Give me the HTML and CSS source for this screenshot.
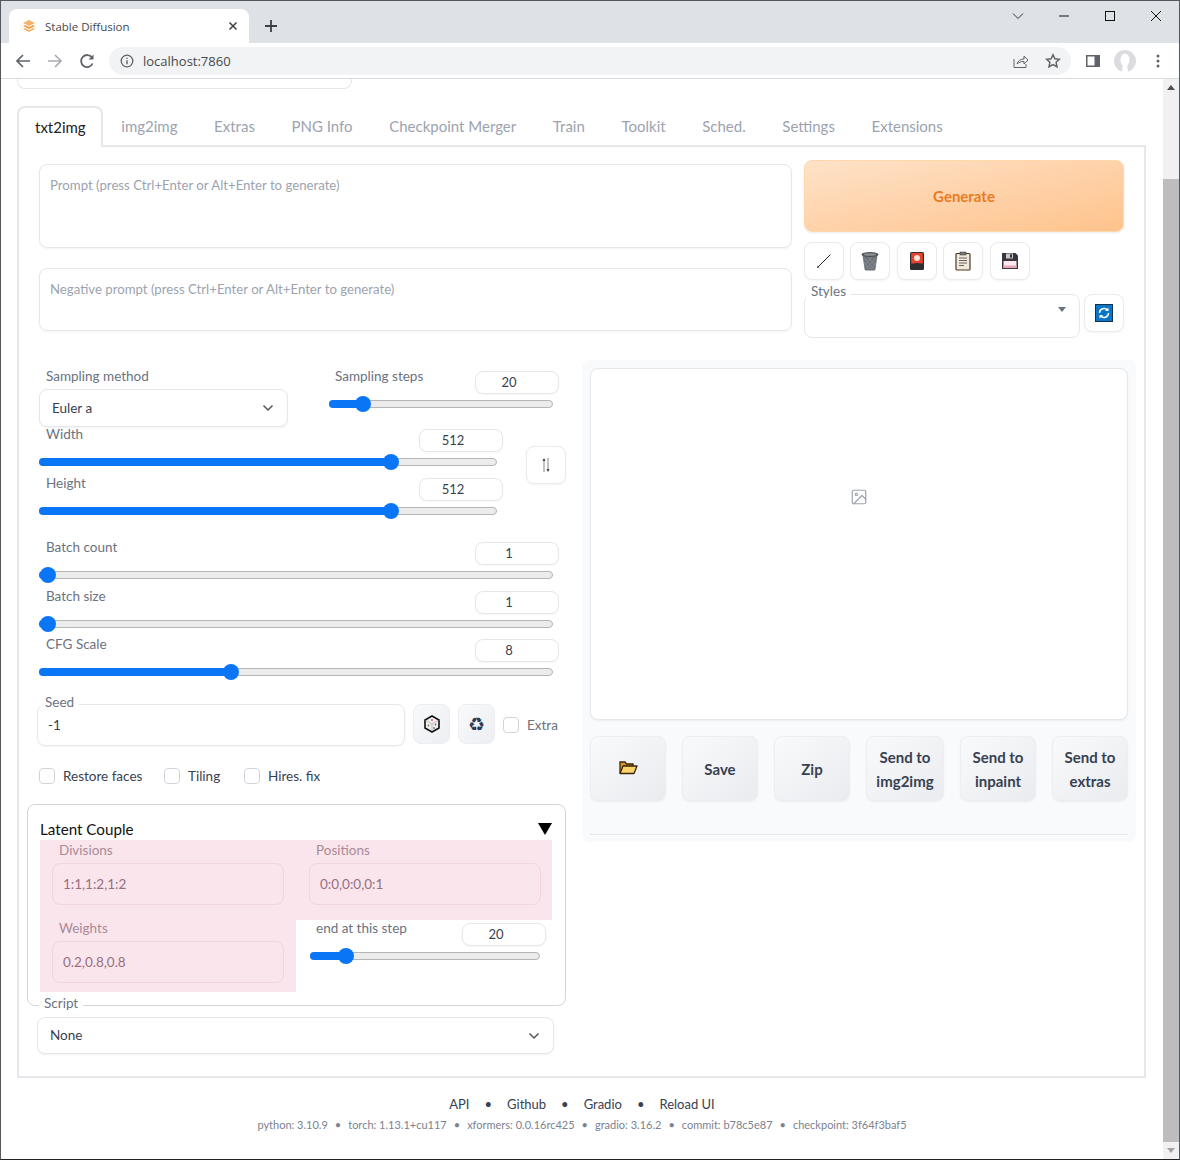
FILE: index.html
```html
<!DOCTYPE html>
<html lang="en">
<head>
  <meta charset="UTF-8">
  <title>Stable Diffusion</title>
  <link rel="stylesheet" href="styles.css">
</head>
<body>
<div class="window">

  <!-- browser chrome -->
  <div class="tabstrip">
    <div class="browser-tab">
      <svg class="favicon" width="14" height="14" viewBox="0 0 14 14"><path d="M7 1l6 3-6 3-6-3z" fill="#f6b26b"/><path d="M1 7l2-1 4 2 4-2 2 1-6 3z" fill="#f19a3e"/><path d="M1 10l2-1 4 2 4-2 2 1-6 3z" fill="#f6b26b"/></svg>
      <span class="browser-tab-title">Stable Diffusion</span>
      <svg class="tab-close" width="10" height="10" viewBox="0 0 10 10"><path d="M1.5 1.5l7 7M8.5 1.5l-7 7" stroke="#3c4043" stroke-width="1.5"/></svg>
    </div>
    <svg class="new-tab" width="14" height="14" viewBox="0 0 14 14"><path d="M7 1v12M1 7h12" stroke="#3c4043" stroke-width="1.8"/></svg>
    <div class="win-controls">
      <svg width="12" height="12" viewBox="0 0 12 12"><path d="M1 3.5l5 5 5-5" fill="none" stroke="#333" stroke-width="1"/></svg>
      <svg width="12" height="12" viewBox="0 0 12 12"><path d="M1 6h10" stroke="#111" stroke-width="1"/></svg>
      <svg width="12" height="12" viewBox="0 0 12 12"><rect x="1.5" y="1.5" width="9" height="9" fill="none" stroke="#111" stroke-width="1"/></svg>
      <svg width="12" height="12" viewBox="0 0 12 12"><path d="M1 1l10 10M11 1L1 11" stroke="#111" stroke-width="1"/></svg>
    </div>
  </div>
  <div class="toolbar">
    <svg class="nav-icon" width="16" height="16" viewBox="0 0 16 16"><path d="M15 8H2M8 2L2 8l6 6" fill="none" stroke="#5f6368" stroke-width="1.7"/></svg>
    <svg class="nav-icon" width="16" height="16" viewBox="0 0 16 16"><path d="M1 8h13M8 2l6 6-6 6" fill="none" stroke="#a9acb0" stroke-width="1.7"/></svg>
    <svg class="nav-icon" width="16" height="16" viewBox="0 0 16 16"><path d="M13.6 10.5A6 6 0 1 1 13 4.5" fill="none" stroke="#5f6368" stroke-width="1.8"/><path d="M14.5 1.5v5h-5z" fill="#5f6368"/></svg>
    <div class="omnibox">
      <svg width="14" height="14" viewBox="0 0 14 14"><circle cx="7" cy="7" r="5.8" fill="none" stroke="#5f6368" stroke-width="1.3"/><path d="M7 6.2v4M7 3.8v1.3" stroke="#5f6368" stroke-width="1.4"/></svg>
      <span class="url">localhost:7860</span>
      <svg class="omni-share" width="16" height="16" viewBox="0 0 16 16"><path d="M1 6v8.500h12V11" fill="none" stroke="#5f6368" stroke-width="1"/><path d="M4 11c1-3.500 4-5 7-5V3l4 4-4 4V8.500c-3 0-5 .7-7 2.500z" fill="none" stroke="#5f6368" stroke-width="1"/></svg>
      <svg class="omni-star" width="16" height="16" viewBox="0 0 16 16"><path d="M8 1.800l1.900 4 4.400.5-3.200 3 .9 4.400L8 11.500l-4 2.200.9-4.400-3.200-3 4.400-.5z" fill="none" stroke="#5f6368" stroke-width="1.500"/></svg>
    </div>
    <svg class="side-panel" width="14" height="12" viewBox="0 0 14 12"><rect width="14" height="12" fill="#5f6368"/><rect x="1.500" y="1.500" width="7" height="9" fill="#fff"/></svg>
    <svg class="avatar" width="22" height="22" viewBox="0 0 22 22"><circle cx="11" cy="11" r="11" fill="#dadce0"/><ellipse cx="11" cy="10" rx="4.500" ry="6.500" fill="#fff"/><path d="M9 14h4l1 8H8z" fill="#fff"/></svg>
    <svg class="dots" width="4" height="14" viewBox="0 0 4 14"><circle cx="2" cy="2" r="1.500" fill="#5f6368"/><circle cx="2" cy="7" r="1.500" fill="#5f6368"/><circle cx="2" cy="12" r="1.500" fill="#5f6368"/></svg>
  </div>

  <div class="viewport">
    <main class="page">
      <div class="checkpoint-stub"></div>

      <nav class="tabs">
        <span class="tab selected">txt2img</span>
        <span class="tab">img2img</span>
        <span class="tab">Extras</span>
        <span class="tab">PNG Info</span>
        <span class="tab">Checkpoint Merger</span>
        <span class="tab">Train</span>
        <span class="tab">Toolkit</span>
        <span class="tab">Sched.</span>
        <span class="tab">Settings</span>
        <span class="tab">Extensions</span>
      </nav>

      <section class="panel">
        <div class="top-row">
          <div class="prompts">
            <div class="prompt prompt-pos">Prompt (press Ctrl+Enter or Alt+Enter to generate)</div>
            <div class="prompt prompt-neg">Negative prompt (press Ctrl+Enter or Alt+Enter to generate)</div>
          </div>
          <div class="actions">
            <button class="generate">Generate</button>
            <div class="tool-row">
              <button class="tool"><svg width="20" height="20" viewBox="0 0 20 20"><path d="M16.500 3.500L4.500 15.500" stroke="#222" stroke-width="1"/><path d="M3 17l.8-2.500 1.700 1.700z" fill="#222"/></svg></button>
              <button class="tool"><svg width="20" height="20" viewBox="0 0 20 20"><path d="M2.500 4l2 14q.2 1.500 1.500 1.500h8q1.300 0 1.500-1.500l2-14z" fill="#6d7378"/><path d="M4 7l10 11M16 7L6 18M3.500 11l6 7M16.500 11l-6 7M8 6l8 9M12 6L4 15" stroke="#8f9498" stroke-width=".7"/><ellipse cx="10" cy="3.500" rx="8.500" ry="2.500" fill="#4b5054"/><ellipse cx="10" cy="3.500" rx="6.500" ry="1.300" fill="#8b9094"/></svg></button>
              <button class="tool"><svg width="20" height="20" viewBox="0 0 20 20"><rect x="3" y="1" width="14" height="18" rx="1.500" fill="#2f2f33"/><rect x="4.200" y="2" width="11.600" height="10.500" fill="#e8412f"/><path d="M4.200 14l5-2 6.600 1v5H4.200z" fill="#2f2f33"/><circle cx="10" cy="7" r="3" fill="#fde3d2"/></svg></button>
              <button class="tool"><svg width="20" height="20" viewBox="0 0 20 20"><rect x="3" y="2.500" width="14" height="16.500" rx="1" fill="#f0e9da" stroke="#4a3a28" stroke-width="1.200"/><rect x="7" y="1" width="6" height="3" fill="#777" stroke="#333" stroke-width=".5"/><path d="M6 7h8M6 9.500h8M6 12h8M6 14.500h5" stroke="#666" stroke-width="1.100"/></svg></button>
              <button class="tool"><svg width="20" height="20" viewBox="0 0 20 20"><path d="M2 2h13.500L18 4.500V18H2z" fill="#3a3340"/><rect x="6" y="2.500" width="7" height="5" fill="#c9c9cc"/><rect x="10" y="3.300" width="2" height="3.300" fill="#3a3340"/><rect x="3.500" y="10" width="13" height="7" fill="#fbe9ee"/><rect x="3.500" y="14.500" width="13" height="2.500" fill="#e3a8b8"/></svg></button>
            </div>
            <div class="styles-row">
              <div class="styles-box">
                <span class="legend styles-legend">Styles</span>
                <span class="caret"></span>
              </div>
              <button class="tool refresh"><svg width="18" height="18" viewBox="0 0 18 18"><rect x=".5" y=".5" width="17" height="17" fill="#0a76c9" stroke="#14304a"/><path d="M4.500 9a4.500 4.500 0 0 1 8-2.800M13.500 9a4.500 4.500 0 0 1-8 2.800" fill="none" stroke="#fff" stroke-width="1.500"/><path d="M13.500 3.500v3.500H10zM4.500 14.500V11H8z" fill="#fff"/></svg></button>
            </div>
          </div>
        </div>

        <div class="main-row">
          <div class="settings">
            <div class="sampler-row">
              <div class="sampler">
                <div class="field-label">Sampling method</div>
                <div class="select">Euler a
                  <svg class="chevron" width="12" height="8" viewBox="0 0 12 8"><path d="M1.500 1.500L6 6l4.500-4.500" fill="none" stroke="#555" stroke-width="1.500"/></svg>
                </div>
              </div>
              <div class="slider steps">
                <div class="slider-head"><span class="field-label">Sampling steps</span><span class="num">20</span></div>
                <div class="track"><div class="fill" style="width:15%"></div><span class="thumb" style="left:15%"></span></div>
              </div>
            </div>

            <div class="size-row">
              <div class="size-sliders">
                <div class="slider">
                  <div class="slider-head"><span class="field-label">Width</span><span class="num">512</span></div>
                  <div class="track"><div class="fill" style="width:76.9%"></div><span class="thumb" style="left:76.9%"></span></div>
                </div>
                <div class="slider">
                  <div class="slider-head"><span class="field-label">Height</span><span class="num">512</span></div>
                  <div class="track"><div class="fill" style="width:76.9%"></div><span class="thumb" style="left:76.9%"></span></div>
                </div>
              </div>
              <button class="tool swap"><svg width="12" height="16" viewBox="0 0 12 16"><path d="M4 15V2M8 1v13" stroke="#666" stroke-width=".8"/><path d="M2.500 4l1.500-3 1.500 3zM6.500 12l1.500 3 1.500-3z" fill="#444"/></svg></button>
            </div>

            <div class="batch-group">
              <div class="slider">
                <div class="slider-head"><span class="field-label">Batch count</span><span class="num">1</span></div>
                <div class="track"><div class="fill" style="width:1.6%"></div><span class="thumb" style="left:1.6%"></span></div>
              </div>
              <div class="slider">
                <div class="slider-head"><span class="field-label">Batch size</span><span class="num">1</span></div>
                <div class="track"><div class="fill" style="width:1.6%"></div><span class="thumb" style="left:1.6%"></span></div>
              </div>
              <div class="slider">
                <div class="slider-head"><span class="field-label">CFG Scale</span><span class="num">8</span></div>
                <div class="track"><div class="fill" style="width:37.4%"></div><span class="thumb" style="left:37.4%"></span></div>
              </div>
            </div>

            <div class="seed-row">
              <div class="seed-box"><span class="legend seed-legend">Seed</span>-1</div>
              <button class="dice"><svg width="18" height="18" viewBox="0 0 18 18"><path d="M9 1l7 4v8l-7 4-7-4V5z" fill="#f3eeee" stroke="#111" stroke-width="1.600"/><path d="M9 9L2.500 5.300M9 9l6.500-3.700M9 9v7.500" stroke="#999" stroke-width=".6"/><circle cx="9" cy="5" r="1.100" fill="#c56b84"/><circle cx="5.500" cy="10.500" r=".9" fill="#777"/><circle cx="12.500" cy="9.500" r=".9" fill="#777"/><circle cx="11" cy="13" r=".9" fill="#777"/></svg></button>
              <button class="dice recycle">♻</button>
              <span class="check-box"></span>
              <span class="check-text extra">Extra</span>
            </div>

            <div class="check-row">
              <span class="check-box"></span><span class="check-text restore">Restore faces</span>
              <span class="check-box"></span><span class="check-text tiling">Tiling</span>
              <span class="check-box"></span><span class="check-text">Hires. fix</span>
            </div>

            <div class="couple">
              <div class="couple-head"><span>Latent Couple</span><span class="open-arrow"></span></div>
              <div class="couple-top">
                <div class="couple-cell">
                  <div class="field-label">Divisions</div>
                  <div class="couple-input">1:1,1:2,1:2</div>
                </div>
                <div class="couple-cell right">
                  <div class="field-label">Positions</div>
                  <div class="couple-input">0:0,0:0,0:1</div>
                </div>
              </div>
              <div class="couple-bottom">
                <div class="couple-cell weights">
                  <div class="field-label">Weights</div>
                  <div class="couple-input">0.2,0.8,0.8</div>
                </div>
                <div class="slider end-step">
                  <div class="slider-head"><span class="field-label">end at this step</span><span class="num">20</span></div>
                  <div class="track"><div class="fill" style="width:15.3%"></div><span class="thumb" style="left:15.3%"></span></div>
                </div>
              </div>
            </div>
            <div class="script-legend">Script</div>
            <div class="select script-select">None
              <svg class="chevron" width="12" height="8" viewBox="0 0 12 8"><path d="M1.500 1.500L6 6l4.500-4.500" fill="none" stroke="#555" stroke-width="1.500"/></svg>
            </div>
          </div>

          <div class="output">
            <div class="gallery">
              <svg width="18" height="18" viewBox="0 0 24 24" fill="none" stroke="#9ca3af" stroke-width="1.600" stroke-linecap="round" stroke-linejoin="round"><rect x="3" y="3" width="18" height="18" rx="2"/><circle cx="8.500" cy="8.500" r="1.500"/><path d="M21 15l-5-5L5 21"/></svg>
            </div>
            <div class="output-buttons">
              <button class="out-btn"><svg width="20" height="16" viewBox="0 0 20 16"><path d="M2 14V3h5l1.500 2H15v2" fill="#d99a2b" stroke="#3a2508" stroke-width="1.300"/><path d="M2 14.500L5 7h14l-3 7.500z" fill="#fbd36b" stroke="#3a2508" stroke-width="1.300" stroke-linejoin="round"/></svg></button>
              <button class="out-btn">Save</button>
              <button class="out-btn">Zip</button>
              <button class="out-btn wide">Send to<br>img2img</button>
              <button class="out-btn">Send to<br>inpaint</button>
              <button class="out-btn">Send to<br>extras</button>
            </div>
            <div class="output-rule"></div>
          </div>
        </div>
      </section>

      <footer class="footer">
        <div class="footer-links">
          <span>API</span><span class="sep">•</span><span>Github</span><span class="sep">•</span><span>Gradio</span><span class="sep">•</span><span>Reload UI</span>
        </div>
        <div class="versions">
          <span>python: 3.10.9</span><span class="dot">•</span><span>torch: 1.13.1+cu117</span><span class="dot">•</span><span>xformers: 0.0.16rc425</span><span class="dot">•</span><span>gradio: 3.16.2</span><span class="dot">•</span><span>commit: b78c5e87</span><span class="dot">•</span><span>checkpoint: 3f64f3baf5</span>
        </div>
      </footer>
    </main>

    <div class="scrollbar">
      <span class="scroll-up"></span>
      <div class="scroll-thumb"></div>
      <span class="scroll-down"></span>
    </div>
  </div>
</div>
</body>
</html>
```

FILE: styles.css
```css
* {
  box-sizing: border-box;
}

body {
  margin: 0;
  font-family: Lato, "Noto Sans", sans-serif;
  font-size: 13.500px;
  color: #374151;
  background: #fff;
}

button {
  font-family: inherit;
  padding: 0;
  cursor: pointer;
}

.window {
  width: 1180px;
  height: 1160px;
  border: 1px solid #55585c;
  border-bottom-color: #222;
  overflow: hidden;
  display: flex;
  flex-direction: column;
}

/* browser chrome */
.tabstrip {
  height: 42px;
  flex: none;
  background: #dee1e6;
  display: flex;
  align-items: flex-end;
  padding-left: 8px;
  font-family: "Open Sans", sans-serif;
}

.browser-tab {
  width: 240px;
  height: 34px;
  background: #fff;
  border-radius: 8px 8px 0 0;
  display: flex;
  align-items: center;
  padding: 0 11px 0 13px;
  font-size: 11.500px;
  color: #45494d;
}

.browser-tab-title {
  margin-left: 9px;
  flex: 1;
}

.new-tab {
  margin: 0 0 10px 15px;
}

.win-controls {
  margin-left: auto;
  align-self: flex-start;
  display: flex;
  gap: 34px;
  padding: 9px 17px 0 0;
}

.toolbar {
  height: 36px;
  flex: none;
  background: #fff;
  border-bottom: 1px solid #dadce0;
  display: flex;
  align-items: center;
  padding-left: 14px;
  font-family: "Open Sans", sans-serif;
}

.nav-icon {
  margin-right: 16px;
}

.omnibox {
  width: 962px;
  height: 28px;
  margin-left: -2px;
  border-radius: 14px;
  background: #f1f3f4;
  display: flex;
  align-items: center;
  padding: 0 10px 0 11px;
}

.url {
  margin-left: 9px;
  font-size: 13px;
  color: #45494d;
  flex: 1;
}

.omni-star {
  margin-left: 16px;
}

.side-panel {
  margin-left: 15px;
}

.avatar {
  margin-left: 14px;
}

.dots {
  margin-left: 20px;
}

/* page */
.viewport {
  flex: 1;
  min-height: 0;
  display: flex;
}

.page {
  flex: 1;
  min-width: 0;
  padding-left: 16px;
}

.checkpoint-stub {
  width: 335px;
  height: 10px;
  border: 1px solid #e5e7eb;
  border-top: 0;
  border-radius: 0 0 8px 8px;
}

.tabs {
  display: flex;
  margin-top: 17px;
  height: 41px;
  font-size: 15px;
  color: #9ca3af;
}

.tab {
  padding: 11px 18.300px 0;
  white-space: nowrap;
}

.tab.selected {
  position: relative;
  z-index: 1;
  width: 86px;
  height: 41px;
  padding: 10px 0 0 16px;
  color: #222;
  background: #fff;
  border: 2px solid #e5e7eb;
  border-bottom: 0;
  border-radius: 8px 8px 0 0;
}

.panel {
  width: 1129px;
  margin-top: -2px;
  border: 2px solid #e5e7eb;
  padding: 0 0 22px 8px;
}

.top-row {
  display: flex;
  gap: 12px;
  margin: 13px 0 0 12px;
}

.prompts {
  width: 753px;
  padding-top: 4px;
}

.prompt {
  border: 1px solid #e5e7eb;
  border-radius: 8px;
  padding: 12px 10px;
  color: #9ca3af;
  font-size: 13.200px;
  box-shadow: 0 1px 2px rgba(0, 0, 0, .05);
}

.prompt-pos {
  height: 84px;
}

.prompt-neg {
  height: 63px;
  margin-top: 20px;
}

.actions {
  width: 320px;
}

.generate {
  display: block;
  width: 100%;
  height: 72px;
  border: 1px solid #fed7aa;
  border-radius: 8px;
  background: linear-gradient(to bottom right, #fee2c8, #ffc38c);
  color: #ea7b22;
  font-size: 15px;
  font-weight: 700;
  box-shadow: 0 1px 2px rgba(0, 0, 0, .08);
}

.tool {
  width: 40px;
  height: 38px;
  background: #fff;
  border: 1px solid #e9ebef;
  border-radius: 8px;
  display: flex;
  align-items: center;
  justify-content: center;
  box-shadow: 0 1px 2px rgba(0, 0, 0, .05);
}

.tool-row {
  display: flex;
  gap: 6.400px;
  margin-top: 10px;
}

.styles-row {
  display: flex;
  justify-content: space-between;
  margin-top: 14px;
}

.styles-box {
  position: relative;
  width: 276px;
  height: 44px;
  border: 1px solid #e5e7eb;
  border-radius: 8px;
}

.legend {
  position: absolute;
  background: #fff;
  color: #6b7280;
  line-height: 16px;
  padding: 0 5px;
}

.styles-legend {
  left: 1px;
  top: -12px;
}

.caret {
  position: absolute;
  right: 13px;
  top: 12px;
  border: 4px solid transparent;
  border-top: 5px solid #6b7280;
  border-bottom: 0;
}

.main-row {
  display: flex;
  gap: 16px;
  margin-top: 22px;
}

.settings {
  width: 539px;
  padding-top: 8px;
}

.field-label {
  line-height: 16px;
  padding-left: 7px;
  color: #6b7280;
}

.sampler-row {
  display: flex;
  padding-left: 12px;
}

.sampler {
  width: 249px;
}

.select {
  position: relative;
  height: 38px;
  margin-top: 5px;
  padding: 10px 12px;
  line-height: 16px;
  background: #fff;
  border: 1px solid #e5e7eb;
  border-radius: 8px;
  box-shadow: 0 1px 2px rgba(0, 0, 0, .05);
}

.chevron {
  position: absolute;
  right: 13px;
  top: 14px;
}

.slider {
  width: 514px;
}

.slider-head {
  display: flex;
  justify-content: space-between;
  margin-right: -6px;
  height: 26px;
}

.num {
  width: 84px;
  height: 23px;
  margin-top: 3px;
  padding-right: 16px;
  border: 1px solid #e5e7eb;
  border-radius: 8px;
  background: #fff;
  text-align: center;
  line-height: 21px;
  font-size: 13px;
  box-shadow: 0 1px 2px rgba(0, 0, 0, .04);
}

.track {
  position: relative;
  height: 8px;
  margin-top: 6px;
  background: #ececec;
  border: 1px solid #b5b5b5;
  border-radius: 4px;
}

.fill {
  height: 8px;
  margin: -1px;
  background: #0b76f5;
  border-radius: 4px;
}

.thumb {
  position: absolute;
  top: -5px;
  width: 16px;
  height: 16px;
  margin-left: -8px;
  border-radius: 50%;
  background: #0b76f5;
}

.steps {
  width: 224px;
  margin-left: 41px;
}

.steps .field-label,
.end-step .field-label {
  padding-left: 6px;
}

.size-row {
  display: flex;
  margin: -1px 0 0 12px;
}

.size-sliders {
  width: 458px;
}

.size-sliders .slider {
  width: 458px;
}

.size-sliders .slider + .slider {
  margin-top: 9px;
}

.swap {
  margin: 20px 0 0 29px;
}

.batch-group {
  margin: 24px 0 0 12px;
}

.batch-group .slider + .slider {
  margin-top: 9px;
}

.batch-group .slider + .slider + .slider {
  margin-top: 8px;
}

.seed-row {
  display: flex;
  align-items: center;
  margin: 28px 0 0 10px;
  height: 42px;
}

.seed-box {
  position: relative;
  width: 368px;
  height: 42px;
  padding: 12px 10px;
  line-height: 16px;
  border: 1px solid #e5e7eb;
  border-radius: 8px;
  box-shadow: 0 1px 2px rgba(0, 0, 0, .05);
}

.seed-legend {
  left: 2px;
  top: -11px;
}

.dice {
  width: 37px;
  height: 40px;
  margin: -2px 8px 0 0;
  background: linear-gradient(to bottom right, #f9fafb, #eceef2);
  border: 1px solid #eceef1;
  border-radius: 8px;
  display: flex;
  align-items: center;
  justify-content: center;
}

.dice:first-of-type {
  margin-left: 8px;
}

.recycle {
  font-family: "DejaVu Sans", sans-serif;
  font-size: 19px;
  color: #2b3a55;
}

.check-box {
  flex: none;
  width: 16px;
  height: 16px;
  background: #fff;
  border: 1px solid #d1d5db;
  border-radius: 4px;
}

.check-text {
  margin-left: 8px;
  line-height: 16px;
  white-space: nowrap;
}

.extra {
  color: #6b7280;
}

.check-row {
  display: flex;
  height: 16px;
  margin: 22px 0 0 12px;
}

.restore {
  margin-right: 24px;
  width: 77px;
}

.tiling {
  width: 32px;
  margin-right: 24px;
}

.couple {
  height: 202px;
  margin-top: 20px;
  border: 1px solid #d1d5db;
  border-radius: 8px;
  padding: 0 13px 0 12px;
}

.couple-head {
  display: flex;
  justify-content: space-between;
  align-items: center;
  height: 35px;
  padding: 13px 0 0 0;
  font-size: 15.200px;
  color: #111;
}

.open-arrow {
  border-left: 7.500px solid transparent;
  border-right: 7.500px solid transparent;
  border-top: 12px solid #000;
}

.couple-top {
  display: flex;
  height: 80px;
  background: #fbe5ec;
}

.couple-bottom {
  display: flex;
}

.couple-cell {
  width: 256px;
  padding: 2px 0 0 12px;
}

.couple-cell.right {
  padding-left: 13px;
}

.couple-cell .field-label {
  color: #a98a96;
}

.couple-input {
  width: 232px;
  height: 42px;
  margin-top: 5px;
  padding: 12px 10px;
  line-height: 16px;
  color: #94707f;
  border: 1px solid #f2d5de;
  border-radius: 8px;
}

.weights {
  height: 72px;
  padding-top: 0;
  background: #fbe5ec;
}

.end-step {
  width: 230px;
  margin-left: 14px;
}

.script-legend {
  position: relative;
  width: fit-content;
  margin: -11px 0 0 12px;
  padding: 0 5px;
  line-height: 16px;
  background: #fff;
  color: #6b7280;
}

.script-select {
  width: 517px;
  height: 37px;
  margin: 6px 0 0 10px;
  padding-top: 9px;
}

/* output column */
.output {
  width: 554px;
  height: 482px;
  padding: 8px;
  background: #f9fafb;
  border-radius: 8px;
}

.gallery {
  height: 352px;
  padding-top: 119px;
  background: #fff;
  border: 1px solid #e5e7eb;
  border-radius: 8px;
  display: flex;
  align-items: flex-start;
  justify-content: center;
  box-shadow: 0 1px 2px rgba(0, 0, 0, .05);
}

.output-buttons {
  display: flex;
  justify-content: space-between;
  margin-top: 16px;
}

.out-btn {
  width: 76px;
  height: 65px;
  border: 1px solid #eceef1;
  border-radius: 8px;
  background: linear-gradient(to bottom right, #f9fafb, #e9ebef);
  color: #374151;
  font-size: 15px;
  font-weight: 700;
  line-height: 24px;
  box-shadow: 0 1px 2px rgba(0, 0, 0, .06);
}

.out-btn.wide {
  width: 78px;
}

.output-rule {
  height: 1px;
  margin-top: 33px;
  background: #e5e7eb;
}

/* footer */
.footer {
  margin-left: -16px;
  padding-top: 17px;
  text-align: center;
}

.footer-links {
  line-height: 18px;
  font-size: 13px;
}

.sep {
  margin: 0 15px;
}

.versions {
  margin-top: 4px;
  line-height: 16px;
  font-size: 11px;
  color: #7b8290;
}

.dot {
  margin: 0 7px;
}

/* scrollbar */
.scrollbar {
  width: 16px;
  flex: none;
  background: #f1f1f1;
  display: flex;
  flex-direction: column;
  align-items: center;
}

.scroll-up {
  margin-top: 6px;
  border: 4px solid transparent;
  border-top: 0;
  border-bottom: 5px solid #505050;
}

.scroll-thumb {
  width: 16px;
  height: 963px;
  margin-top: 89px;
  background: #bdbdbd;
}

.scroll-down {
  margin-top: 6px;
  border: 4px solid transparent;
  border-bottom: 0;
  border-top: 5px solid #a3a3a3;
}
```
